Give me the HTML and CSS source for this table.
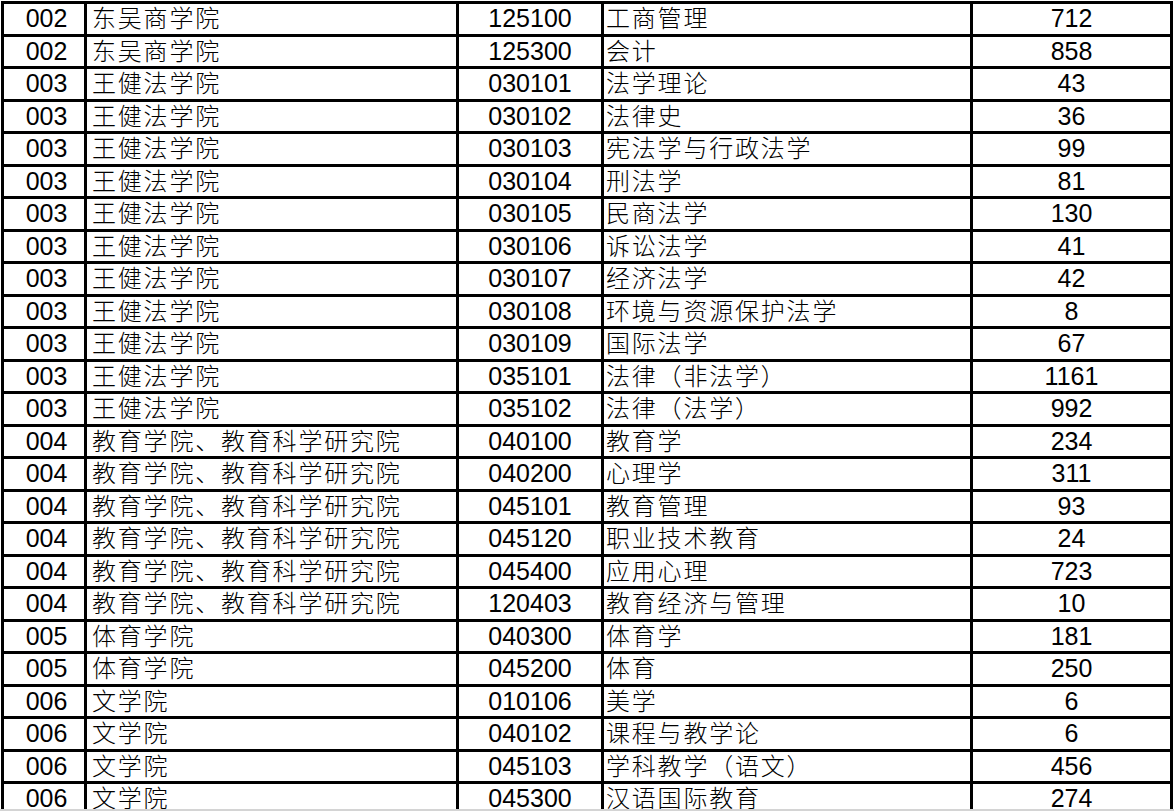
FILE: index.html
```html
<!DOCTYPE html>
<html lang="zh-CN">
<head>
<meta charset="utf-8">
<title>招生计划</title>
<link rel="stylesheet" href="styles.css">
</head>
<body>
<div class="frame">
<div class="sheet">
<div class="cell code">002</div><div class="cell name">东吴商学院</div><div class="cell mcode">125100</div><div class="cell major">工商管理</div><div class="cell num">712</div>
<div class="cell code">002</div><div class="cell name">东吴商学院</div><div class="cell mcode">125300</div><div class="cell major">会计</div><div class="cell num">858</div>
<div class="cell code">003</div><div class="cell name">王健法学院</div><div class="cell mcode">030101</div><div class="cell major">法学理论</div><div class="cell num">43</div>
<div class="cell code">003</div><div class="cell name">王健法学院</div><div class="cell mcode">030102</div><div class="cell major">法律史</div><div class="cell num">36</div>
<div class="cell code">003</div><div class="cell name">王健法学院</div><div class="cell mcode">030103</div><div class="cell major">宪法学与行政法学</div><div class="cell num">99</div>
<div class="cell code">003</div><div class="cell name">王健法学院</div><div class="cell mcode">030104</div><div class="cell major">刑法学</div><div class="cell num">81</div>
<div class="cell code">003</div><div class="cell name">王健法学院</div><div class="cell mcode">030105</div><div class="cell major">民商法学</div><div class="cell num">130</div>
<div class="cell code">003</div><div class="cell name">王健法学院</div><div class="cell mcode">030106</div><div class="cell major">诉讼法学</div><div class="cell num">41</div>
<div class="cell code">003</div><div class="cell name">王健法学院</div><div class="cell mcode">030107</div><div class="cell major">经济法学</div><div class="cell num">42</div>
<div class="cell code">003</div><div class="cell name">王健法学院</div><div class="cell mcode">030108</div><div class="cell major">环境与资源保护法学</div><div class="cell num">8</div>
<div class="cell code">003</div><div class="cell name">王健法学院</div><div class="cell mcode">030109</div><div class="cell major">国际法学</div><div class="cell num">67</div>
<div class="cell code">003</div><div class="cell name">王健法学院</div><div class="cell mcode">035101</div><div class="cell major">法律（非法学）</div><div class="cell num">1161</div>
<div class="cell code">003</div><div class="cell name">王健法学院</div><div class="cell mcode">035102</div><div class="cell major">法律（法学）</div><div class="cell num">992</div>
<div class="cell code">004</div><div class="cell name">教育学院、教育科学研究院</div><div class="cell mcode">040100</div><div class="cell major">教育学</div><div class="cell num">234</div>
<div class="cell code">004</div><div class="cell name">教育学院、教育科学研究院</div><div class="cell mcode">040200</div><div class="cell major">心理学</div><div class="cell num">311</div>
<div class="cell code">004</div><div class="cell name">教育学院、教育科学研究院</div><div class="cell mcode">045101</div><div class="cell major">教育管理</div><div class="cell num">93</div>
<div class="cell code">004</div><div class="cell name">教育学院、教育科学研究院</div><div class="cell mcode">045120</div><div class="cell major">职业技术教育</div><div class="cell num">24</div>
<div class="cell code">004</div><div class="cell name">教育学院、教育科学研究院</div><div class="cell mcode">045400</div><div class="cell major">应用心理</div><div class="cell num">723</div>
<div class="cell code">004</div><div class="cell name">教育学院、教育科学研究院</div><div class="cell mcode">120403</div><div class="cell major">教育经济与管理</div><div class="cell num">10</div>
<div class="cell code">005</div><div class="cell name">体育学院</div><div class="cell mcode">040300</div><div class="cell major">体育学</div><div class="cell num">181</div>
<div class="cell code">005</div><div class="cell name">体育学院</div><div class="cell mcode">045200</div><div class="cell major">体育</div><div class="cell num">250</div>
<div class="cell code">006</div><div class="cell name">文学院</div><div class="cell mcode">010106</div><div class="cell major">美学</div><div class="cell num">6</div>
<div class="cell code">006</div><div class="cell name">文学院</div><div class="cell mcode">040102</div><div class="cell major">课程与教学论</div><div class="cell num">6</div>
<div class="cell code">006</div><div class="cell name">文学院</div><div class="cell mcode">045103</div><div class="cell major">学科教学（语文）</div><div class="cell num">456</div>
<div class="cell code">006</div><div class="cell name">文学院</div><div class="cell mcode">045300</div><div class="cell major">汉语国际教育</div><div class="cell num">274</div>
</div>
</div>
</body>
</html>
```
FILE: styles.css
```css
html, body {
  margin: 0;
  padding: 0;
  background: #fff;
}

body {
  overflow: hidden;
}

.frame {
  height: 809px;
  overflow: hidden;
  border-bottom: 2px solid #d4d4d4;
}

.sheet {
  display: grid;
  grid-template-columns: 80px 369px 142px 366px 197px;
  grid-auto-rows: 29.5px;
  gap: 3px;
  padding: 3px;
  margin: 1px 0 0 1px;
  width: max-content;
  background: #000;
}

.cell {
  background: #fff;
  color: #000;
  display: flex;
  align-items: center;
  white-space: nowrap;
  font-family: "Liberation Sans", Arial, sans-serif;
  font-size: 25px;
  line-height: 29px;
}

.code {
  justify-content: center;
  padding-left: 5px;
}

.mcode,
.num {
  justify-content: center;
}

.name,
.major {
  font-family: "Noto Sans CJK SC", "Liberation Sans", sans-serif;
  font-size: 24px;
  font-weight: 300;
  letter-spacing: 1.8px;
  line-height: 26px;
  padding-bottom: 3px;
}

.name {
  padding-left: 5px;
}

.major {
  padding-left: 2px;
}
```
